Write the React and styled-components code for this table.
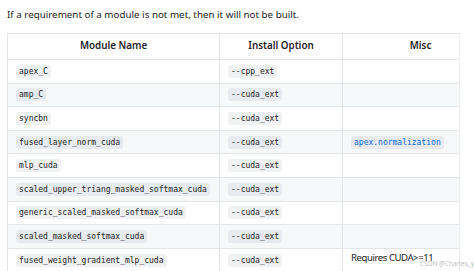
import React from "react";
import styled, { createGlobalStyle } from "styled-components";

const rows = [
  { name: "apex_C", opt: "--cpp_ext" },
  { name: "amp_C", opt: "--cuda_ext" },
  { name: "syncbn", opt: "--cuda_ext" },
  { name: "fused_layer_norm_cuda", opt: "--cuda_ext", misc: "apex.normalization", link: true },
  { name: "mlp_cuda", opt: "--cuda_ext" },
  { name: "scaled_upper_triang_masked_softmax_cuda", opt: "--cuda_ext" },
  { name: "generic_scaled_masked_softmax_cuda", opt: "--cuda_ext" },
  { name: "scaled_masked_softmax_cuda", opt: "--cuda_ext" },
  { name: "fused_weight_gradient_mlp_cuda", opt: "--cuda_ext", note: "Requires CUDA>=11" },
];

function App() {
  return (
    <>
      <GlobalStyle />
      <Page>
        <Intro>If a requirement of a module is not met, then it will not be built.</Intro>
        <TableWrap>
          <Table>
            <colgroup>
              <Col $w={212} />
              <Col $w={123} />
              <Col $w={156} />
            </colgroup>
            <thead>
              <tr>
                <Th>Module Name</Th>
                <Th>Install Option</Th>
                <Th>Misc</Th>
              </tr>
            </thead>
            <tbody>
              {rows.map((r, i) => (
                <Row key={r.name} $striped={i % 2 === 1}>
                  <Td><Code>{r.name}</Code></Td>
                  <Td><Code>{r.opt}</Code></Td>
                  <Td>
                    {r.misc && <Code $link={r.link}>{r.misc}</Code>}
                    {r.note && <Note>{r.note}</Note>}
                  </Td>
                </Row>
              ))}
            </tbody>
          </Table>
        </TableWrap>
        <Watermark>CSDN @Charles_yy</Watermark>
      </Page>
    </>
  );
}

export default App;

const GlobalStyle = createGlobalStyle`
  html, body {
    margin: 0;
    padding: 0;
    background: #fff;
  }
  body {
    font-family: "Noto Sans", "Liberation Sans", sans-serif;
    color: #1f2328;
    overflow: hidden;
  }
`;

const Page = styled.div`
  position: relative;
  width: 474px;
  height: 271px;
  overflow: hidden;
  padding: 0 0 0 7px;
  box-sizing: border-box;
`;

const Intro = styled.p`
  margin: 0;
  padding-top: 8px;
  height: 25px;
  font-size: 9.8px;
  line-height: 14px;
  color: #1f2328;
`;

const TableWrap = styled.div`
  width: 453px;
  overflow: hidden;
  border-right: 1px solid #eef0f2;
  box-sizing: border-box;
`;

const Table = styled.table`
  border-collapse: collapse;
  border-spacing: 0;
  table-layout: fixed;
  width: 491px;
  font-size: 9.8px;
`;

const Col = styled.col`
  width: ${(p) => p.$w}px;
`;

const Th = styled.th`
  box-sizing: border-box;
  padding: 5px 8px 6px;
  font-size: 9.8px;
  font-weight: 600;
  line-height: 14px;
  text-align: center;
  border: 1px solid #e3e6e9;
  background: #fff;
`;

const Row = styled.tr`
  background: ${(p) => (p.$striped ? "#f6f8fa" : "#fff")};
`;

const Td = styled.td`
  padding: 4px 8px;
  line-height: 14.6px;
  height: 14.6px;
  border: 1px solid #e3e6e9;
  white-space: nowrap;
  vertical-align: middle;
  overflow: hidden;
`;

const Code = styled.code`
  display: inline-block;
  vertical-align: middle;
  font-family: "DejaVu Sans Mono", "Liberation Mono", monospace;
  font-size: 8px;
  line-height: 13px;
  padding: 0 3px;
  border-radius: 3px;
  background: rgba(175, 184, 193, 0.2);
  color: ${(p) => (p.$link ? "#0969da" : "#1f2328")};
`;

const Note = styled.span`
  font-size: 9.6px;
  letter-spacing: -0.45px;
  position: relative;
  top: -2px;
`;

const Watermark = styled.div`
  position: absolute;
  left: 420px;
  top: 259px;
  font-size: 6.5px;
  color: rgba(120, 120, 120, 0.5);
  white-space: nowrap;
`;
